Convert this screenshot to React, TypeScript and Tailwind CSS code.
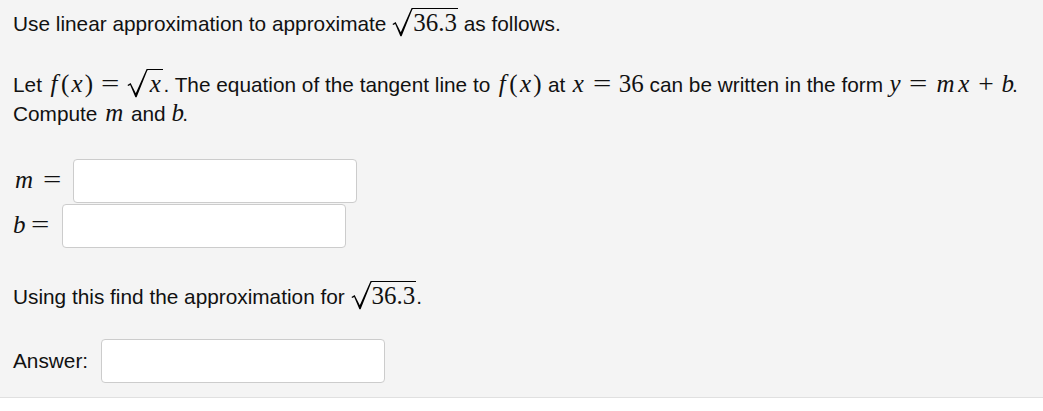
import React from "react";

const serif = { fontFamily: '"Liberation Serif", "Times New Roman", serif' };

type P = { children: React.ReactNode; w: string };

const V = ({ children, w }: P) => (
  <span className={`inline-block italic text-[25px] leading-none text-center ${w}`} style={serif}>
    {children}
  </span>
);
const R = ({ children, w }: P) => (
  <span className={`inline-block not-italic text-[25px] leading-none text-center ${w}`} style={serif}>
    {children}
  </span>
);

const F = () => <V w="w-[12.5px]">f</V>;
const X = () => <V w="w-[14.3px]">x</V>;
const Y = () => <V w="w-[12.5px]">y</V>;
const Mv = () => <V w="w-[22px]">m</V>;
const B = () => <V w="w-[10.7px]">b</V>;
const LP = () => <R w="w-[9.7px]">(</R>;
const RP = () => <R w="w-[9.7px]">)</R>;
const Eq = () => (
  <R w="w-[33.3px]">
    <span className="inline-block scale-x-[1.3]">=</span>
  </R>
);
const Plus = () => (
  <R w="w-[30.5px]">
    <span className="inline-block scale-x-[1.1]">+</span>
  </R>
);
const Num = ({ children }: { children: React.ReactNode }) => (
  <span className="not-italic text-[25px] leading-none" style={serif}>
    {children}
  </span>
);

const Sqrt = ({ children }: { children: React.ReactNode }) => (
  <span className="relative inline-block pl-[21px] leading-none">
    <svg width="21" height="29" viewBox="0 0 21 29" className="absolute left-0 top-0">
      <polygon
        points="0.5,16 3.6,14 8.8,24.2 19.6,0 21,0 21,1.2 20.4,1.2 9.6,28.2 8.4,28.2 3.2,16 1.1,17.1"
        fill="#000"
      />
    </svg>
    <span className="inline-block border-t-[1.2px] border-black text-[25px] leading-[1.1] pr-[1px]" style={serif}>
      {children}
    </span>
  </span>
);

const Input = () => (
  <div className="w-[284px] h-[44px] bg-white border border-[#cccccc] rounded-[4px]" />
);

export default function App() {
  return (
    <div className="w-[1043px] h-[411px] bg-white" style={{ fontFamily: '"Liberation Sans", Arial, sans-serif' }}>
      <div className="h-[398px] bg-[#f4f4f4] border-b border-[#e0e0e0] pl-[13px] pt-[8px] text-[20.8px] text-[#111] leading-[30px]">
        <div className="h-[30px] whitespace-nowrap">
          Use linear approximation to approximate <Sqrt>36.3</Sqrt> as follows.
        </div>
        <div className="mt-[31px] h-[30px] whitespace-nowrap">
          Let <F /><LP /><X /><RP /><Eq /><Sqrt><X /></Sqrt>. The equation of the tangent line to <F /><LP /><X /><RP /> at <X /><Eq /><Num>36</Num> can be written in the form <Y /><Eq /><Mv /><X /><Plus /><B />.
        </div>
        <div className="h-[30px] whitespace-nowrap">
          Compute <Mv /> and <B />.
        </div>
        <div className="mt-[30px] flex items-center">
          <span className="w-[60px] whitespace-nowrap"><Mv /><Eq /></span>
          <Input />
        </div>
        <div className="mt-[1px] flex items-center">
          <span className="w-[49px] whitespace-nowrap"><B /><Eq /></span>
          <Input />
        </div>
        <div className="mt-[33px] h-[30px] whitespace-nowrap">
          Using this find the approximation for <Sqrt>36.3</Sqrt>.
        </div>
        <div className="mt-[28px] flex items-center">
          <span className="w-[88px]">Answer:</span>
          <Input />
        </div>
      </div>
    </div>
  );
}
